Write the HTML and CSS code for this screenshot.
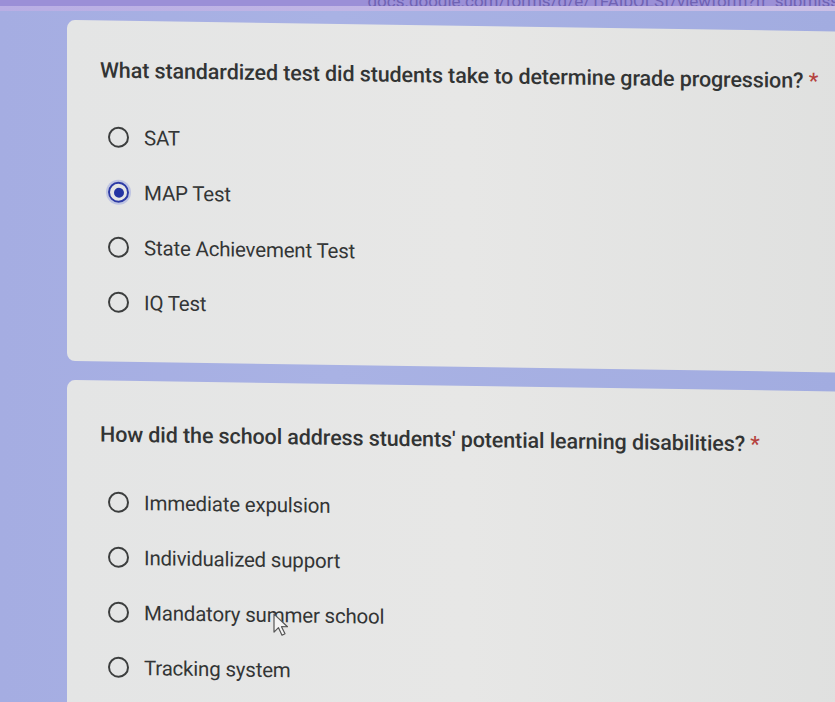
FILE: index.html
```html
<!DOCTYPE html>
<html>
<head>
<meta charset="utf-8">
<link rel="stylesheet" href="styles.css">
</head>
<body>
<div class="page">
  <div class="urlbar"><span class="url">docs.google.com/forms/d/e/1FAIpQLSf/viewform?fr_submiss</span></div>
  <div class="band"></div>
  <div class="tilt">
    <section class="card card1">
      <h2 class="question">What standardized test did students take to determine grade progression? <span class="req">*</span></h2>
      <div class="options">
        <label class="option"><span class="radio"></span><span class="text">SAT</span></label>
        <label class="option"><span class="radio checked"><span class="dot"></span></span><span class="text">MAP Test</span></label>
        <label class="option"><span class="radio"></span><span class="text">State Achievement Test</span></label>
        <label class="option"><span class="radio"></span><span class="text">IQ Test</span></label>
      </div>
    </section>
    <section class="card card2">
      <h2 class="question">How did the school address students' potential learning disabilities? <span class="req">*</span></h2>
      <div class="options">
        <label class="option"><span class="radio"></span><span class="text">Immediate expulsion</span></label>
        <label class="option"><span class="radio"></span><span class="text">Individualized support</span></label>
        <label class="option"><span class="radio"></span><span class="text">Mandatory summer school</span><svg class="cursor" width="16" height="24" viewBox="0 0 16 24"><path d="M1 1 L1 19 L5.5 14.5 L9 22 L12 20.5 L8.5 13.5 L14.5 13.5 Z" fill="#f4f4f4" stroke="#555" stroke-width="1.2" stroke-linejoin="round"/></svg></label>
        <label class="option"><span class="radio"></span><span class="text">Tracking system</span></label>
      </div>
    </section>
  </div>
</div>
</body>
</html>
```
FILE: styles.css
```css
html, body {
  margin: 0;
  padding: 0;
}
body {
  width: 835px;
  height: 702px;
  overflow: hidden;
  background: linear-gradient(90deg, #a5ade2 0%, #a9b2e4 40%, #a2ace0 100%);
  font-family: Roboto, "Liberation Sans", Arial, sans-serif;
}
.page {
  display: flex;
  flex-direction: column;
}
.urlbar {
  height: 6px;
  background: #9b8fd7;
  overflow: hidden;
  display: flex;
  justify-content: flex-end;
}
.url {
  font-size: 17px;
  line-height: 10px;
  color: #6f62b3;
  white-space: nowrap;
  margin-right: -4px;
  margin-top: -4px;
}
.band {
  height: 5px;
  background: linear-gradient(90deg, #b9aee4, #cbbfe6);
}
.tilt {
  display: flex;
  flex-direction: column;
  gap: 19px;
  margin-top: 9px;
  margin-left: 67px;
  width: 800px;
  transform: skewY(0.85deg);
  transform-origin: left top;
}
.card {
  background: linear-gradient(90deg, #e4e5e5 0%, #e7e7e6 50%, #dfe0df 100%);
  border-radius: 8px 0 0 8px;
  padding-left: 33px;
  display: flex;
  flex-direction: column;
}
.card1 {
  padding-top: 37px;
  padding-bottom: 32px;
}
.card2 {
  padding-top: 41px;
  padding-bottom: 40px;
}
.question {
  margin: 0;
  font-size: 21.5px;
  line-height: 26px;
  font-weight: 500;
  color: #323434;
  white-space: nowrap;
  letter-spacing: -0.1px;
}
.req {
  color: #b5433f;
}
.options {
  display: flex;
  flex-direction: column;
  margin-top: 26px;
}
.card2 .options {
  margin-top: 27px;
}
.option {
  height: 55px;
  display: flex;
  align-items: center;
  gap: 15px;
  padding-left: 8px;
  position: relative;
}
.radio {
  width: 17px;
  height: 17px;
  border: 2.5px solid #3c3e3e;
  border-radius: 50%;
  display: flex;
  align-items: center;
  justify-content: center;
  flex: none;
}
.radio.checked {
  border-color: #2c3aa6;
  box-shadow: 0 0 0 2px rgba(120, 135, 220, 0.35);
}
.dot {
  width: 10px;
  height: 10px;
  border-radius: 50%;
  background: #2434a3;
}
.text {
  font-size: 20.5px;
  color: #333535;
  letter-spacing: -0.2px;
}
.cursor {
  position: absolute;
  left: 173px;
  top: 26px;
}
```
